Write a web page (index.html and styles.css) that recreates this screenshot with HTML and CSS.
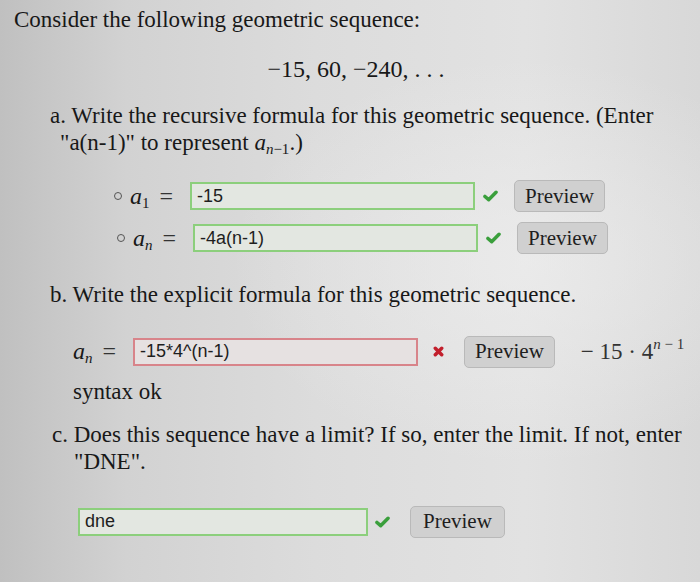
FILE: index.html
```html
<!DOCTYPE html>
<html lang="en">
<head>
<meta charset="utf-8">
<title>Geometric sequence</title>
<link rel="stylesheet" href="styles.css">
</head>
<body>
<main class="page">
  <p class="intro">Consider the following geometric sequence:</p>
  <p class="sequence">&minus;15, 60, &minus;240, . . .</p>

  <p class="part part-a">a. Write the recursive formula for this geometric sequence. (Enter <span class="nw">"a(n-1)"</span> to represent <span class="m"><i>a</i><sub><i>n</i>&minus;1</sub></span>.)</p>

  <div class="rows">
    <div class="row">
      <span class="bullet"></span>
      <span class="lhs"><span class="m"><i>a</i><sub>1</sub></span><span class="eq">=</span></span>
      <span class="field ok">-15</span>
      <svg class="mark" viewBox="0 0 16 13" width="15" height="12"><path d="M2 7 L6 10.5 L14 2.5" fill="none" stroke="#3a9f3c" stroke-width="3.8" stroke-linecap="round" stroke-linejoin="round"/></svg>
      <span class="btn">Preview</span>
    </div>
    <div class="row row-2">
      <span class="bullet"></span>
      <span class="lhs"><span class="m"><i>a</i><sub><i>n</i></sub></span><span class="eq">=</span></span>
      <span class="field ok">-4a(n-1)</span>
      <svg class="mark" viewBox="0 0 16 13" width="15" height="12"><path d="M2 7 L6 10.5 L14 2.5" fill="none" stroke="#3a9f3c" stroke-width="3.8" stroke-linecap="round" stroke-linejoin="round"/></svg>
      <span class="btn">Preview</span>
    </div>
  </div>

  <p class="part part-b">b. Write the explicit formula for this geometric sequence.</p>

  <div class="row row-b">
    <span class="lhs lhs-b"><span class="m"><i>a</i><sub><i>n</i></sub></span><span class="eq">=</span></span>
    <span class="field bad">-15*4^(n-1)</span>
    <svg class="mark mark-x" viewBox="0 0 12 12" width="11" height="11"><path d="M2.5 2.5 L9.5 9.5 M9.5 2.5 L2.5 9.5" fill="none" stroke="#c21f2c" stroke-width="3.8" stroke-linecap="round"/></svg>
    <span class="btn">Preview</span>
    <span class="result">&minus; 15 &middot; 4<sup><i>n</i> &minus; 1</sup></span>
  </div>
  <p class="syntax">syntax ok</p>

  <p class="part part-c">c. Does this sequence have a limit? If so, enter the limit. If not, enter "DNE".</p>

  <div class="row row-c">
    <span class="field ok wide">dne</span>
    <svg class="mark" viewBox="0 0 16 13" width="15" height="12"><path d="M2 7 L6 10.5 L14 2.5" fill="none" stroke="#3a9f3c" stroke-width="3.8" stroke-linecap="round" stroke-linejoin="round"/></svg>
    <span class="btn">Preview</span>
  </div>
</main>
</body>
</html>
```
FILE: styles.css
```css
html, body {
  margin: 0;
  height: 100%;
}
body {
  background:
    radial-gradient(ellipse 60% 50% at 75% 45%, rgba(240,240,240,0.6), rgba(240,240,240,0) 70%),
    linear-gradient(90deg, #c0c0c0 0%, #d2d2d2 18%, #dcdcdc 45%, #e2e2e2 75%, #d8d8d8 100%);
  font-family: "Liberation Serif", "Times New Roman", serif;
  font-size: 23px;
  line-height: 27px;
  color: #181818;
  overflow: hidden;
}
.page {
  padding: 6px 4px 0 14px;
}
p {
  margin: 0;
}
.nw { white-space: nowrap; }
.sequence {
  margin-top: 23px;
  text-align: center;
  font-size: 24px;
  padding-left: 2px;
}
.part {
  padding-left: 46px;
  text-indent: -10px;
}
.part-a { margin-top: 19px; }
.part-b { margin-top: 27px; }
.part-c {
  margin-top: 16px;
  padding-left: 60px;
  text-indent: -22px;
}

.m i { font-style: italic; }
.m sub {
  font-size: 15px;
  vertical-align: -4px;
  line-height: 0;
}

.rows {
  margin-top: 24px;
  padding-left: 99px;
  display: flex;
  flex-direction: column;
  gap: 10px;
}
.row {
  display: flex;
  align-items: center;
  height: 32px;
}
.row-2 { padding-left: 3px; }
.bullet {
  box-sizing: border-box;
  width: 8px;
  height: 8px;
  margin-left: 1px;
  margin-right: 8px;
  border: 1.5px solid #555;
  border-radius: 50%;
}
.lhs {
  width: 60px;
  display: flex;
  align-items: center;
  font-size: 24px;
}
.lhs .eq {
  margin-left: 10px;
  color: #333;
}
.field {
  box-sizing: border-box;
  width: 285px;
  height: 28px;
  padding: 0 5px;
  display: flex;
  align-items: center;
  font-family: "Liberation Sans", Arial, sans-serif;
  font-size: 18px;
  color: #1e1e1e;
  border: 2px solid;
}
.field.ok {
  border-color: #8ccf7c;
  background: #e3e7e1;
}
.field.bad {
  border-color: #d8848a;
  background: #e6e1e1;
}
.mark {
  margin-left: 8px;
  width: 15px;
}
.btn {
  box-sizing: border-box;
  margin-left: 16px;
  height: 32px;
  padding: 0 10px;
  display: flex;
  align-items: center;
  border: 1px solid #b9b9b9;
  border-radius: 5px;
  background: #d0d0d0;
  font-size: 21px;
  color: #1e1e1e;
}
.row-b {
  margin-top: 27px;
  padding-left: 59px;
  height: 33px;
}
.lhs-b { width: 60px; }
.mark-x {
  margin-left: 15px;
  width: 11px;
}
.row-b .btn { margin-left: 20px; }
.result {
  margin-left: 26px;
  color: #333;
  font-size: 23px;
  white-space: nowrap;
}
.result sup {
  font-size: 15px;
  vertical-align: 10px;
  line-height: 0;
}
.syntax {
  margin-top: 10px;
  padding-left: 59px;
}
.row-c {
  margin-top: 30px;
  padding-left: 64px;
  height: 33px;
}
.field.wide { width: 290px; }
.row-c .mark { margin-left: 7px; }
.row-c .btn { margin-left: 20px; padding: 0 12px; }
```
